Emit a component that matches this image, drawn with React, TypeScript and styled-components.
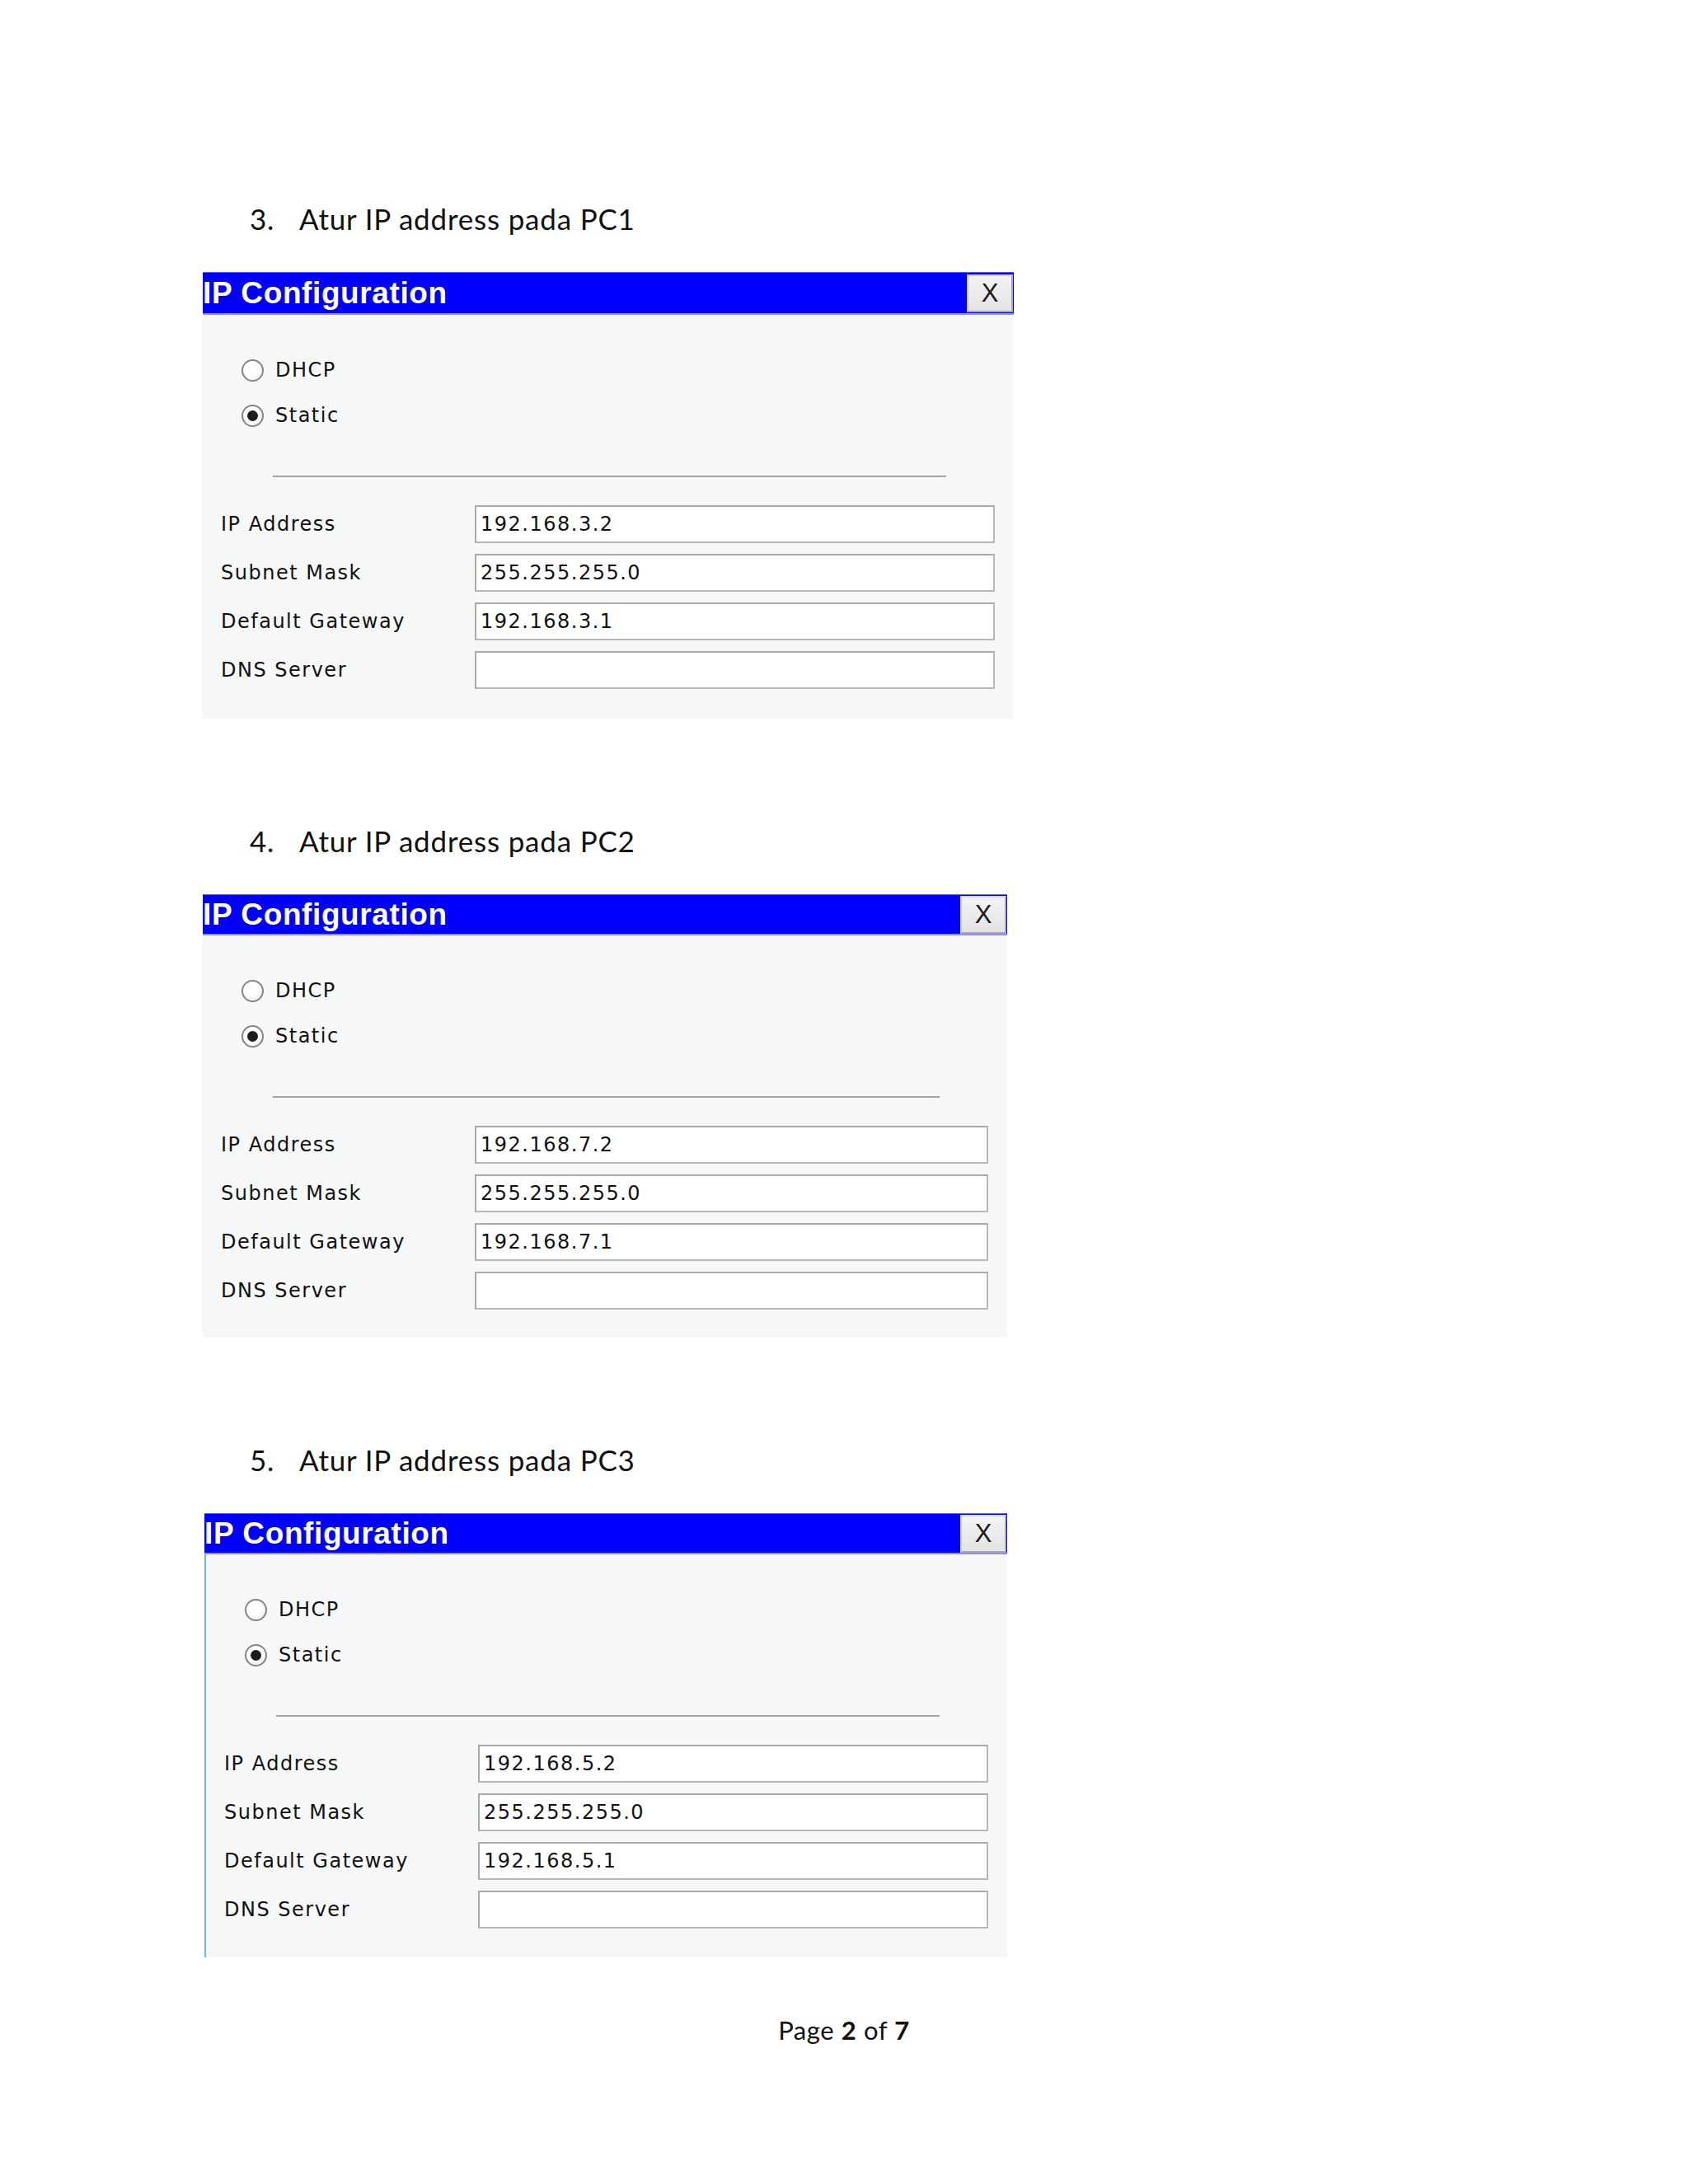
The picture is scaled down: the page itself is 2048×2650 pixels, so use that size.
import React from "react";
import styled, { createGlobalStyle } from "styled-components";

const GlobalStyle = createGlobalStyle`
  html, body {
    margin: 0;
    padding: 0;
    background: #ffffff;
  }
  body {
    font-family: Lato, "Open Sans", sans-serif;
  }
`;

const Page = styled.div`
  width: 2048px;
  min-height: 2650px;
  box-sizing: border-box;
  padding-top: 244px;
  display: flex;
  flex-direction: column;
  background: #ffffff;
`;

const Section = styled.section`
  display: flex;
  flex-direction: column;
  padding-left: 246px;
  & + & {
    margin-top: 127px;
  }
`;

const Heading = styled.h2`
  margin: 0 0 44px 57px;
  display: flex;
  font-family: Lato, "Open Sans", sans-serif;
  font-weight: 400;
  font-size: 35px;
  line-height: 42px;
  letter-spacing: 0.8px;
  color: #111111;
`;

const Num = styled.span`
  width: 60px;
  flex: none;
`;

const Dialog = styled.div<{ $w: number; $shift: number }>`
  width: ${(p) => p.$w}px;
  margin-left: ${(p) => p.$shift}px;
  display: flex;
  flex-direction: column;
`;

const TitleBar = styled.div<{ $h: number }>`
  height: ${(p) => p.$h}px;
  box-sizing: border-box;
  background: #0000ff;
  border-top: 1px solid #5c5cff;
  border-bottom: 2px solid #8c8cff;
  display: flex;
  align-items: center;
  justify-content: space-between;
  padding-right: 1px;
`;

const Title = styled.span`
  font-family: "Liberation Sans", Arial, sans-serif;
  font-weight: 700;
  font-size: 37px;
  color: #ffffff;
  letter-spacing: 0.6px;
  white-space: nowrap;
`;

const CloseButton = styled.div`
  width: 56px;
  height: 46px;
  box-sizing: border-box;
  background: linear-gradient(#f3f3f3, #e3e3e3);
  border: 2px solid #a8a8a8;
  border-top-color: #d4d4d4;
  border-left-color: #d4d4d4;
  font-family: "Liberation Sans", Arial, sans-serif;
  font-size: 31px;
  color: #1a1a1a;
  display: flex;
  align-items: center;
  justify-content: center;
  flex: none;
`;

const Body = styled.div<{ $accent: boolean; $pb: number }>`
  background: #f6f7f7;
  padding: 47px 23px ${(p) => p.$pb}px 22px;
  border-left: ${(p) => (p.$accent ? "2px solid #6ab8df" : "none")};
  display: flex;
  flex-direction: column;
`;

const RadioGroup = styled.div`
  display: flex;
  flex-direction: column;
  gap: 15px;
  padding-left: 25px;
`;

const RadioRow = styled.div`
  height: 40px;
  display: flex;
  align-items: center;
  gap: 14px;
`;

const RadioCircle = styled.span<{ $checked: boolean }>`
  width: 27px;
  height: 27px;
  box-sizing: border-box;
  border-radius: 50%;
  border: 2px solid #858585;
  background: radial-gradient(circle at 40% 35%, #ffffff 40%, #e6e6e6 100%);
  display: flex;
  align-items: center;
  justify-content: center;
  flex: none;
  &::after {
    content: "";
    display: ${(p) => (p.$checked ? "block" : "none")};
    width: 13px;
    height: 13px;
    border-radius: 50%;
    background: #1c1c1c;
  }
`;

const UiText = styled.span`
  font-family: "DejaVu Sans", Verdana, sans-serif;
  font-size: 24px;
  letter-spacing: 1.5px;
  color: #111111;
  white-space: nowrap;
`;

const Separator = styled.div`
  height: 2px;
  background: #a3a3a3;
  margin: 53px 59px 0 63px;
`;

const FieldGrid = styled.div`
  margin-top: 34px;
  display: grid;
  grid-template-columns: 308px 1fr;
  row-gap: 13px;
  align-items: center;
`;

const Field = styled.div`
  height: 46px;
  box-sizing: border-box;
  background: #ffffff;
  border: 2px solid #a9a9a9;
  border-bottom-color: #b8b8b8;
  border-right-color: #b8b8b8;
  padding-left: 5px;
  display: flex;
  align-items: center;
`;

const Footer = styled.footer`
  margin-top: 70px;
  text-align: center;
  font-family: Lato, "Open Sans", sans-serif;
  font-size: 31px;
  line-height: 37px;
  letter-spacing: 0.6px;
  color: #111111;
`;

type Config = {
  n: string;
  pc: string;
  ip: string;
  gw: string;
  w: number;
  shift: number;
  bar: number;
  pb: number;
  accent: boolean;
};

const configs: Config[] = [
  { n: "3.", pc: "PC1", ip: "192.168.3.2", gw: "192.168.3.1", w: 984, shift: 0, bar: 52, pb: 36, accent: false },
  { n: "4.", pc: "PC2", ip: "192.168.7.2", gw: "192.168.7.1", w: 976, shift: 0, bar: 50, pb: 34, accent: false },
  { n: "5.", pc: "PC3", ip: "192.168.5.2", gw: "192.168.5.1", w: 974, shift: 2, bar: 50, pb: 35, accent: true },
];

function IpDialog({ c }: { c: Config }) {
  const rows: [string, string][] = [
    ["IP Address", c.ip],
    ["Subnet Mask", "255.255.255.0"],
    ["Default Gateway", c.gw],
    ["DNS Server", ""],
  ];
  return (
    <Dialog $w={c.w} $shift={c.shift}>
      <TitleBar $h={c.bar}>
        <Title>IP Configuration</Title>
        <CloseButton>X</CloseButton>
      </TitleBar>
      <Body $accent={c.accent} $pb={c.pb}>
        <RadioGroup>
          <RadioRow>
            <RadioCircle $checked={false} />
            <UiText>DHCP</UiText>
          </RadioRow>
          <RadioRow>
            <RadioCircle $checked={true} />
            <UiText>Static</UiText>
          </RadioRow>
        </RadioGroup>
        <Separator />
        <FieldGrid>
          {rows.map(([label, value]) => (
            <React.Fragment key={label}>
              <UiText>{label}</UiText>
              <Field>
                <UiText>{value}</UiText>
              </Field>
            </React.Fragment>
          ))}
        </FieldGrid>
      </Body>
    </Dialog>
  );
}

export default function App() {
  return (
    <>
      <GlobalStyle />
      <Page>
        {configs.map((c) => (
          <Section key={c.pc}>
            <Heading>
              <Num>{c.n}</Num>
              <span>Atur IP address pada {c.pc}</span>
            </Heading>
            <IpDialog c={c} />
          </Section>
        ))}
        <Footer>
          Page <b>2</b> of <b>7</b>
        </Footer>
      </Page>
    </>
  );
}
